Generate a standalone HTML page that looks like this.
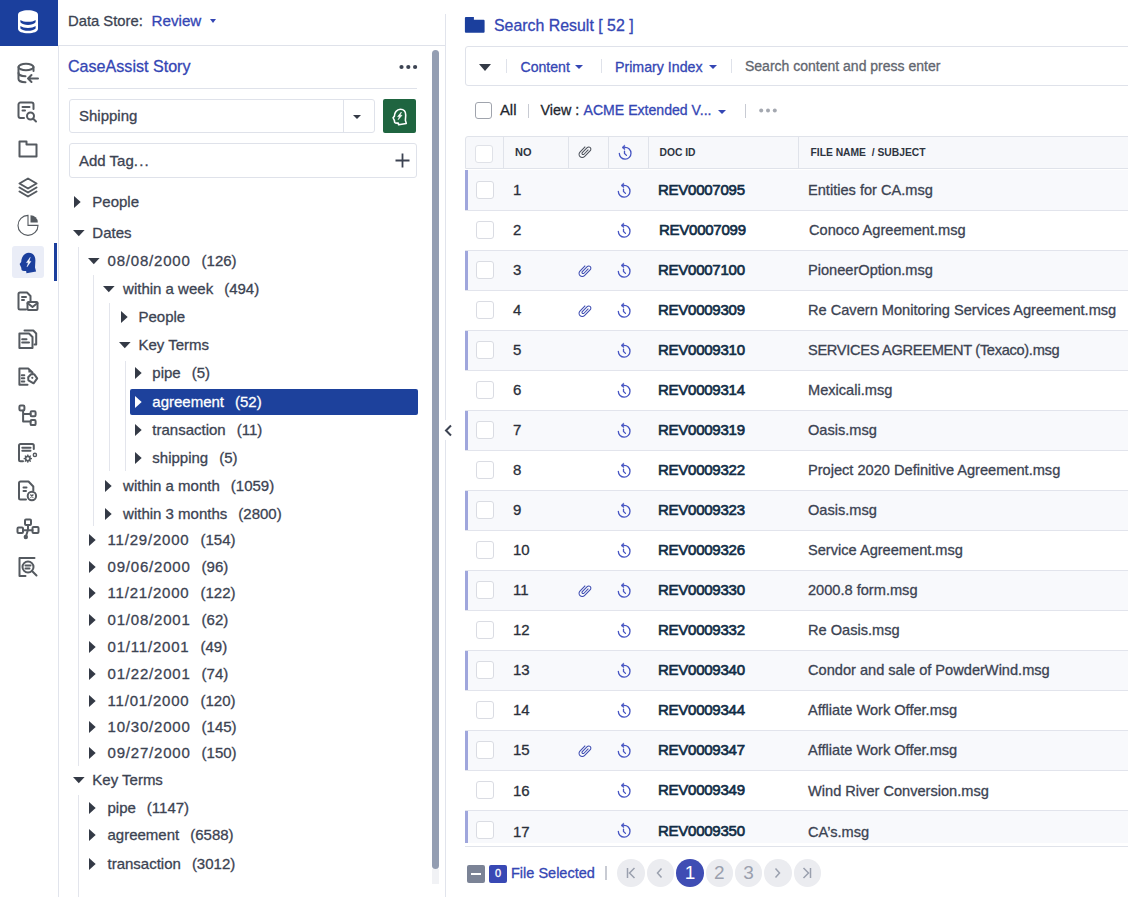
<!DOCTYPE html>
<html><head><meta charset="utf-8">
<style>
*{margin:0;padding:0;box-sizing:border-box}
html,body{width:1128px;height:897px;overflow:hidden;background:#fff;font-family:"Liberation Sans",sans-serif;color:#3c4352;-webkit-text-stroke:0.3px currentColor}
.abs{position:absolute}
.tr{width:0;height:0;border-top:5.9px solid transparent;border-bottom:5.9px solid transparent;border-left:6.6px solid #343a46}
.td{width:0;height:0;border-left:5.8px solid transparent;border-right:5.8px solid transparent;border-top:6.6px solid #343a46}
.tt{font-size:15px;line-height:20px;white-space:nowrap}

.cnt{margin-left:11px}
.row{left:465px;width:680px;height:40px}
.rb{left:465px;width:680px;height:1px;background:#e2e4ec}
.cb{width:18px;height:18px;border:1px solid #dadce3;border-radius:3px;background:#fff}
.rt{top:10px;font-size:15px;line-height:20px;color:#2a2f3a}
.rd{top:9.5px;font-size:15px;line-height:20px;letter-spacing:-0.25px;-webkit-text-stroke:0.65px currentColor;color:#102c45;white-space:nowrap}
.rf{top:10px;font-size:14.6px;line-height:20px;color:#3c4352;white-space:nowrap}
</style></head><body>
<!-- left nav -->
<div class="abs" style="left:0;top:0;width:58px;height:46px;background:#1b3f9d"></div>
<svg class="abs" style="left:17px;top:9px" width="22" height="26" viewBox="0 0 22 26">
<path d="M1 5.8C1 2.8 5.5 1.3 11 1.3s10 1.5 10 4.5v14c0 3-4.5 4.5-10 4.5S1 22.8 1 19.8z" fill="#fff"/>
<path d="M3.4 11C5 12.3 8 12.8 11 12.8S17 12.3 18.6 11V13.2C17 14.9 14 15.9 11 15.9S5 14.9 3.4 13.2z" fill="#1b3f9d"/>
<path d="M3.4 17.1C5 18.4 8 18.9 11 18.9S17 18.4 18.6 17.1V19.4C17 21 14 21.8 11 21.8S5 21 3.4 19.4z" fill="#1b3f9d"/>
</svg>
<div class="abs" style="left:57.5px;top:46px;width:1px;height:851px;background:#e1e4ec"></div>
<div class="abs" style="left:12px;top:246px;width:32px;height:32px;background:#eaedf7;border-radius:3px"></div>
<svg class="abs" style="left:19px;top:252px" width="18" height="22" viewBox="0 0 18 22"><path d="M9.75 0.8C13.5 0.8 16.4 3.5 16.4 8.5C16.4 11 16 13 16 15.5L17.1 19.5L7.5 21.3L7.1 19C5.5 19.2 3.2 19 2.6 18L2.2 15.5L1.5 14L0.6 12L2.2 10C2.2 5.5 5 0.8 9.75 0.8z" fill="#1b3f9d"/><path d="M11.2 5.4L7.5 10.6H9.5L8.1 14.8L11.9 9.4H9.9z" fill="#fff" stroke="#fff" stroke-width="0.5" stroke-linejoin="round"/></svg>
<div class="abs" style="left:54px;top:243px;width:3px;height:38px;background:#1b3f9d"></div>
<svg class="abs" style="left:16px;top:62px" width="24" height="24" viewBox="0 0 24 24"><g fill="none" stroke="#555a60" stroke-width="2" stroke-linecap="round" stroke-linejoin="round"><ellipse cx="10" cy="5" rx="7.5" ry="3.2"/><path d="M2.5 5v12c0 1.8 3 3.2 7 3.2"/><path d="M17.5 5v4"/><path d="M2.5 11c0 1.8 3 3.2 7 3.2"/><path d="M12 16.5h10M15.5 13l-3.5 3.5 3.5 3.5"/></g></svg>
<svg class="abs" style="left:16px;top:100px" width="24" height="24" viewBox="0 0 24 24"><g fill="none" stroke="#555a60" stroke-width="2" stroke-linecap="round" stroke-linejoin="round"><path d="M8 18H4.5a2 2 0 0 1-2-2V4.5a2 2 0 0 1 2-2h11a2 2 0 0 1 2 2V9"/><path d="M6.5 7h7M6.5 10.5h2.5"/><circle cx="14.5" cy="16" r="3.5"/><path d="M17 18.5l3 3"/></g></svg>
<svg class="abs" style="left:16px;top:137px" width="24" height="24" viewBox="0 0 24 24"><g fill="none" stroke="#555a60" stroke-width="2" stroke-linecap="round" stroke-linejoin="round"><path d="M3.5 4.5h7v3h10v12h-17z"/></g></svg>
<svg class="abs" style="left:16px;top:175px" width="24" height="24" viewBox="0 0 24 24"><g fill="none" stroke="#555a60" stroke-width="2" stroke-linecap="round" stroke-linejoin="round"><path d="M12 3.5l8.5 5-8.5 5-8.5-5z"/><path d="M3.5 12.5l8.5 5 8.5-5"/><path d="M3.5 16.5l8.5 5 8.5-5"/></g></svg>
<svg class="abs" style="left:16px;top:213px" width="24" height="24" viewBox="0 0 24 24"><path d="M12 2.4A10 10 0 1 0 22 12.4H12z" fill="none" stroke="#555a60" stroke-width="1.1" stroke-linejoin="miter"/><path d="M14.5 2.3A7.2 7.2 0 0 1 21.8 9.4H14.5z" fill="#555a60"/></svg>
<svg class="abs" style="left:16px;top:289px" width="24" height="24" viewBox="0 0 24 24"><g fill="none" stroke="#555a60" stroke-width="2" stroke-linecap="round" stroke-linejoin="round"><path d="M10 20.5H4a1.5 1.5 0 0 1-1.5-1.5V5A1.5 1.5 0 0 1 4 3.5h7l3.5 3.5v5"/><path d="M6 8h4M6 11h2"/><rect x="11.5" y="13" width="10" height="8" rx="1"/><path d="M11.5 14l5 4 5-4"/></g></svg>
<svg class="abs" style="left:16px;top:327px" width="24" height="24" viewBox="0 0 24 24"><g fill="none" stroke="#555a60" stroke-width="2" stroke-linecap="round" stroke-linejoin="round"><path d="M3.4 6.5H13L16.5 10V20.9H3.4z"/><path d="M6.2 12.2H10.5M6.2 15.4H13"/><path d="M8.5 3.5H17.3L20.2 6.5V17.5H18.5"/></g></svg>
<svg class="abs" style="left:16px;top:365px" width="24" height="24" viewBox="0 0 24 24"><g fill="none" stroke="#555a60" stroke-width="2" stroke-linecap="round" stroke-linejoin="round"><path d="M11.5 19.8H3.4V3.6H12.4L16.5 7.5V8.8"/><path d="M5.8 10.3H8.3M5.8 13.2H8.3M5.8 16.6H8.3"/><path d="M12.2 12.3L15 9.3H18.3L21.2 13.3L17.6 18.3L12.4 15.3z"/></g><path d="M12.4 3.6L16.5 7.5H12.4z" fill="#555a60"/><circle cx="16.3" cy="12.8" r="1.1" fill="#555a60"/></svg>
<svg class="abs" style="left:16px;top:403px" width="24" height="24" viewBox="0 0 24 24"><g fill="none" stroke="#555a60" stroke-width="2" stroke-linecap="round" stroke-linejoin="round"><rect x="3.4" y="2.5" width="5" height="5" rx="1.2"/><rect x="14.6" y="8.3" width="5" height="5" rx="1.2"/><rect x="14.6" y="17.1" width="5" height="5" rx="1.2"/><path d="M7.1 7.5V18.4H14.6M7.1 11H14.6"/></g></svg>
<svg class="abs" style="left:16px;top:441px" width="24" height="24" viewBox="0 0 24 24"><g fill="none" stroke="#555a60" stroke-width="2" stroke-linecap="round" stroke-linejoin="round"><path d="M7 20.3H4.5A1.5 1.5 0 0 1 3 18.8V4.5A1.5 1.5 0 0 1 4.5 3H16.3A1.5 1.5 0 0 1 17.8 4.5V8"/><path d="M6.3 6.8H14.5M6.3 9.8H14.5"/></g><path d="M14.80 16.83L15.97 17.07L15.97 18.13L14.80 18.37L14.47 19.18L15.12 20.17L14.37 20.92L13.38 20.27L12.57 20.60L12.33 21.77L11.27 21.77L11.03 20.60L10.22 20.27L9.23 20.92L8.48 20.17L9.13 19.18L8.80 18.37L7.63 18.13L7.63 17.07L8.80 16.83L9.13 16.02L8.48 15.03L9.23 14.28L10.22 14.93L11.03 14.60L11.27 13.43L12.33 13.43L12.57 14.60L13.38 14.93L14.37 14.28L15.12 15.03L14.47 16.02z" fill="#555a60"/><circle cx="11.80" cy="17.60" r="1.3" fill="#fff"/><circle cx="18.9" cy="13.9" r="1.6" fill="none" stroke="#555a60" stroke-width="1.4"/></svg>
<svg class="abs" style="left:16px;top:479px" width="24" height="24" viewBox="0 0 24 24"><g fill="none" stroke="#555a60" stroke-width="2" stroke-linecap="round" stroke-linejoin="round"><path d="M10 20.5H4.5A1.5 1.5 0 0 1 3 19V4A1.5 1.5 0 0 1 4.5 2.5H12.5L17.3 7.5V11.5"/><path d="M7.5 8.5H10.5M7.5 12H10"/><circle cx="15.9" cy="17" r="4.2"/></g><path d="M14.4 15.5l3 3M17.4 15.5l-3 3" stroke="#555a60" stroke-width="1.3"/></svg>
<svg class="abs" style="left:16px;top:517px" width="24" height="24" viewBox="0 0 24 24"><g fill="none" stroke="#555a60" stroke-width="2" stroke-linecap="round" stroke-linejoin="round"><rect x="9" y="2.5" width="6" height="5.5" rx="1"/><rect x="1.5" y="10.5" width="5.5" height="5.5" rx="1"/><rect x="16.5" y="10" width="6" height="6" rx="1"/><path d="M12 8v5M7 13.3h9.5M12 13l-2 6"/></g><circle cx="9.8" cy="20" r="2.2" fill="#555a60"/></svg>
<svg class="abs" style="left:16px;top:555px" width="24" height="24" viewBox="0 0 24 24"><g fill="none" stroke="#555a60" stroke-width="2" stroke-linecap="round" stroke-linejoin="round"><path d="M18.5 3H3.5v18h6"/><circle cx="12" cy="12" r="5.5"/><path d="M9.5 10.5h5M9.5 13.5h4M16 16l4.5 4.5"/></g></svg>
<!-- top header -->
<div class="abs" style="left:58px;top:45px;width:388px;height:1px;background:#dfe2ea"></div>
<div class="abs" style="left:68px;top:11px;font-size:14.8px;line-height:20px;color:#3c4352;white-space:nowrap">Data Store:</div>
<div class="abs" style="left:151.5px;top:11px;font-size:15.2px;line-height:20px;color:#3446b4;white-space:nowrap">Review</div>
<div class="abs td" style="left:209.5px;top:19px;border-left-width:3.5px;border-right-width:3.5px;border-top-width:4px;border-top-color:#3446b4"></div>
<!-- left panel -->
<div class="abs" style="left:445px;top:14px;width:1px;height:406px;background:#e1e4ec"></div>
<div class="abs" style="left:445px;top:440px;width:1px;height:457px;background:#e1e4ec"></div>
<svg class="abs" style="left:444px;top:424px" width="9" height="13" viewBox="0 0 9 13"><path d="M7 1.5L2 6.5l5 5" fill="none" stroke="#3c4352" stroke-width="2"/></svg>
<div class="abs" style="left:68px;top:56px;font-size:16.1px;line-height:20px;color:#3446b4;white-space:nowrap">CaseAssist Story</div>
<svg class="abs" style="left:399px;top:64px" width="19" height="6" viewBox="0 0 19 6"><circle cx="2.5" cy="3" r="2.1" fill="#3c4352"/><circle cx="9.3" cy="3" r="2.1" fill="#3c4352"/><circle cx="16.1" cy="3" r="2.1" fill="#3c4352"/></svg>
<div class="abs" style="left:68px;top:88px;width:349px;height:1px;background:#dfe2ea"></div>
<div class="abs" style="left:69px;top:99px;width:306px;height:34px;border:1px solid #dfe2ea;border-radius:3px"></div>
<div class="abs" style="left:343px;top:100px;width:1px;height:32px;background:#dfe2ea"></div>
<div class="abs td" style="left:353px;top:114.5px;border-left-width:4.5px;border-right-width:4.5px;border-top-width:4.5px"></div>
<div class="abs" style="left:79px;top:106px;font-size:15px;line-height:20px;color:#3c4352">Shipping</div>
<div class="abs" style="left:383px;top:99px;width:33px;height:34px;background:#1f6540;border-radius:2px"></div>
<svg class="abs" style="left:390px;top:106px" width="18" height="20" viewBox="0 0 18 20"><g transform="translate(2.6 2.6) scale(0.8 0.76)"><path d="M9.75 0.8C13.5 0.8 16.4 3.5 16.4 8.5C16.4 11 16 13 16 15.5L17.1 19.5L7.5 21.3L7.1 19C5.5 19.2 3.2 19 2.6 18L2.2 15.5L1.5 14L0.6 12L2.2 10C2.2 5.5 5 0.8 9.75 0.8z" fill="none" stroke="#fff" stroke-width="2" stroke-linejoin="round"/></g><path d="M11.4 6L7.6 10.6H9.5L8.1 13.8L12 9.3H10.1z" fill="#fff" stroke="#fff" stroke-width="0.6" stroke-linejoin="round"/></svg>
<div class="abs" style="left:69px;top:143px;width:348px;height:35px;border:1px solid #dfe2ea;border-radius:3px"></div>
<div class="abs" style="left:79px;top:151px;font-size:15px;line-height:20px;color:#3c4352">Add Tag<span style="letter-spacing:1.2px">...</span></div>
<svg class="abs" style="left:395px;top:153px" width="15" height="15" viewBox="0 0 15 15"><path d="M7.5 0.5v14M0.5 7.5h14" stroke="#3c4352" stroke-width="1.8"/></svg>
<div class="abs" style="left:432px;top:50px;width:7px;height:819px;background:#949eb2;border-radius:3.5px"></div>
<div class="abs" style="left:432px;top:869px;width:7px;height:15px;background:#f1f2f5"></div>
<div class="abs" style="left:78.0px;top:247px;width:1px;height:519px;background:#e3e5ec"></div>
<div class="abs" style="left:93.0px;top:275px;width:1px;height:251px;background:#e3e5ec"></div>
<div class="abs" style="left:109.0px;top:303px;width:1px;height:168px;background:#e3e5ec"></div>
<div class="abs" style="left:125.0px;top:361px;width:1px;height:110px;background:#e3e5ec"></div>
<div class="abs" style="left:78.0px;top:795px;width:1px;height:102px;background:#e3e5ec"></div>
<div class="abs" style="left:130px;top:389px;width:288px;height:26px;background:#1d419c;border-radius:2px"></div>
<svg class="abs" style="left:73px;top:195.4px" width="9" height="14" viewBox="0 0 9 14"><path d="M1 1.1L7.7 7 1 12.9z" fill="#343a46"/></svg>
<div class="abs tt" style="left:92.3px;top:192.4px;color:#3c4352"><span style="">People</span></div>
<svg class="abs" style="left:71.7px;top:228.5px" width="14" height="9" viewBox="0 0 14 9"><path d="M1 1H12.6L6.8 7.3z" fill="#343a46"/></svg>
<div class="abs tt" style="left:92.3px;top:222.5px;color:#3c4352"><span style="">Dates</span></div>
<svg class="abs" style="left:86.7px;top:256.8px" width="14" height="9" viewBox="0 0 14 9"><path d="M1 1H12.6L6.8 7.3z" fill="#343a46"/></svg>
<div class="abs tt" style="left:107.5px;top:250.8px;color:#3c4352"><span style="letter-spacing:0.8px;">08/08/2000</span><span class="cnt">(126)</span></div>
<svg class="abs" style="left:102.2px;top:284.7px" width="14" height="9" viewBox="0 0 14 9"><path d="M1 1H12.6L6.8 7.3z" fill="#343a46"/></svg>
<div class="abs tt" style="left:123.1px;top:278.7px;color:#3c4352"><span style="">within a week</span><span class="cnt">(494)</span></div>
<svg class="abs" style="left:119.5px;top:310.2px" width="9" height="14" viewBox="0 0 9 14"><path d="M1 1.1L7.7 7 1 12.9z" fill="#343a46"/></svg>
<div class="abs tt" style="left:138.5px;top:307.2px;color:#3c4352"><span style="">People</span></div>
<svg class="abs" style="left:118.2px;top:341.2px" width="14" height="9" viewBox="0 0 14 9"><path d="M1 1H12.6L6.8 7.3z" fill="#343a46"/></svg>
<div class="abs tt" style="left:138.5px;top:335.2px;color:#3c4352"><span style="">Key Terms</span></div>
<svg class="abs" style="left:134.4px;top:366.3px" width="9" height="14" viewBox="0 0 9 14"><path d="M1 1.1L7.7 7 1 12.9z" fill="#343a46"/></svg>
<div class="abs tt" style="left:152.3px;top:363.3px;color:#3c4352"><span style="">pipe</span><span class="cnt">(5)</span></div>
<svg class="abs" style="left:134.4px;top:394.5px" width="9" height="14" viewBox="0 0 9 14"><path d="M1 1.1L7.7 7 1 12.9z" fill="#ffffff"/></svg>
<div class="abs tt" style="left:152.3px;top:391.5px;color:#ffffff"><span style="">agreement</span><span class="cnt">(52)</span></div>
<svg class="abs" style="left:134.4px;top:422.6px" width="9" height="14" viewBox="0 0 9 14"><path d="M1 1.1L7.7 7 1 12.9z" fill="#343a46"/></svg>
<div class="abs tt" style="left:152.3px;top:419.6px;color:#3c4352"><span style="">transaction</span><span class="cnt">(11)</span></div>
<svg class="abs" style="left:134.4px;top:450.6px" width="9" height="14" viewBox="0 0 9 14"><path d="M1 1.1L7.7 7 1 12.9z" fill="#343a46"/></svg>
<div class="abs tt" style="left:152.3px;top:447.6px;color:#3c4352"><span style="">shipping</span><span class="cnt">(5)</span></div>
<svg class="abs" style="left:103.5px;top:478.7px" width="9" height="14" viewBox="0 0 9 14"><path d="M1 1.1L7.7 7 1 12.9z" fill="#343a46"/></svg>
<div class="abs tt" style="left:123.1px;top:475.7px;color:#3c4352"><span style="">within a month</span><span class="cnt">(1059)</span></div>
<svg class="abs" style="left:103.5px;top:506.7px" width="9" height="14" viewBox="0 0 9 14"><path d="M1 1.1L7.7 7 1 12.9z" fill="#343a46"/></svg>
<div class="abs tt" style="left:123.1px;top:503.7px;color:#3c4352"><span style="">within 3 months</span><span class="cnt">(2800)</span></div>
<svg class="abs" style="left:88px;top:532.5px" width="9" height="14" viewBox="0 0 9 14"><path d="M1 1.1L7.7 7 1 12.9z" fill="#343a46"/></svg>
<div class="abs tt" style="left:107.5px;top:529.5px;color:#3c4352"><span style="letter-spacing:0.8px;">11/29/2000</span><span class="cnt">(154)</span></div>
<svg class="abs" style="left:88px;top:559.5px" width="9" height="14" viewBox="0 0 9 14"><path d="M1 1.1L7.7 7 1 12.9z" fill="#343a46"/></svg>
<div class="abs tt" style="left:107.5px;top:556.5px;color:#3c4352"><span style="letter-spacing:0.8px;">09/06/2000</span><span class="cnt">(96)</span></div>
<svg class="abs" style="left:88px;top:586.2px" width="9" height="14" viewBox="0 0 9 14"><path d="M1 1.1L7.7 7 1 12.9z" fill="#343a46"/></svg>
<div class="abs tt" style="left:107.5px;top:583.2px;color:#3c4352"><span style="letter-spacing:0.8px;">11/21/2000</span><span class="cnt">(122)</span></div>
<svg class="abs" style="left:88px;top:613.3px" width="9" height="14" viewBox="0 0 9 14"><path d="M1 1.1L7.7 7 1 12.9z" fill="#343a46"/></svg>
<div class="abs tt" style="left:107.5px;top:610.3px;color:#3c4352"><span style="letter-spacing:0.8px;">01/08/2001</span><span class="cnt">(62)</span></div>
<svg class="abs" style="left:88px;top:639.8px" width="9" height="14" viewBox="0 0 9 14"><path d="M1 1.1L7.7 7 1 12.9z" fill="#343a46"/></svg>
<div class="abs tt" style="left:107.5px;top:636.8px;color:#3c4352"><span style="letter-spacing:0.8px;">01/11/2001</span><span class="cnt">(49)</span></div>
<svg class="abs" style="left:88px;top:667.0px" width="9" height="14" viewBox="0 0 9 14"><path d="M1 1.1L7.7 7 1 12.9z" fill="#343a46"/></svg>
<div class="abs tt" style="left:107.5px;top:664.0px;color:#3c4352"><span style="letter-spacing:0.8px;">01/22/2001</span><span class="cnt">(74)</span></div>
<svg class="abs" style="left:88px;top:693.6px" width="9" height="14" viewBox="0 0 9 14"><path d="M1 1.1L7.7 7 1 12.9z" fill="#343a46"/></svg>
<div class="abs tt" style="left:107.5px;top:690.6px;color:#3c4352"><span style="letter-spacing:0.8px;">11/01/2000</span><span class="cnt">(120)</span></div>
<svg class="abs" style="left:88px;top:720.2px" width="9" height="14" viewBox="0 0 9 14"><path d="M1 1.1L7.7 7 1 12.9z" fill="#343a46"/></svg>
<div class="abs tt" style="left:107.5px;top:717.2px;color:#3c4352"><span style="letter-spacing:0.8px;">10/30/2000</span><span class="cnt">(145)</span></div>
<svg class="abs" style="left:88px;top:746.0px" width="9" height="14" viewBox="0 0 9 14"><path d="M1 1.1L7.7 7 1 12.9z" fill="#343a46"/></svg>
<div class="abs tt" style="left:107.5px;top:743.0px;color:#3c4352"><span style="letter-spacing:0.8px;">09/27/2000</span><span class="cnt">(150)</span></div>
<svg class="abs" style="left:71.7px;top:776.4px" width="14" height="9" viewBox="0 0 14 9"><path d="M1 1H12.6L6.8 7.3z" fill="#343a46"/></svg>
<div class="abs tt" style="left:92.3px;top:770.4px;color:#3c4352"><span style="">Key Terms</span></div>
<svg class="abs" style="left:88px;top:800.7px" width="9" height="14" viewBox="0 0 9 14"><path d="M1 1.1L7.7 7 1 12.9z" fill="#343a46"/></svg>
<div class="abs tt" style="left:107.5px;top:797.7px;color:#3c4352"><span style="">pipe</span><span class="cnt">(1147)</span></div>
<svg class="abs" style="left:88px;top:827.8px" width="9" height="14" viewBox="0 0 9 14"><path d="M1 1.1L7.7 7 1 12.9z" fill="#343a46"/></svg>
<div class="abs tt" style="left:107.5px;top:824.8px;color:#3c4352"><span style="">agreement</span><span class="cnt">(6588)</span></div>
<svg class="abs" style="left:88px;top:857.3px" width="9" height="14" viewBox="0 0 9 14"><path d="M1 1.1L7.7 7 1 12.9z" fill="#343a46"/></svg>
<div class="abs tt" style="left:107.5px;top:854.3px;color:#3c4352"><span style="">transaction</span><span class="cnt">(3012)</span></div>
<!-- right panel -->
<svg class="abs" style="left:464px;top:16px" width="21" height="17" viewBox="0 0 21 17"><path d="M0.9 2.1A1 1 0 0 1 1.9 1.1H9.9V3.7H19.6A1 1 0 0 1 20.6 4.7V15.8A1 1 0 0 1 19.6 16.8H1.9A1 1 0 0 1 0.9 15.8z" fill="#1b3f9d"/></svg>
<div class="abs" style="left:494px;top:16px;font-size:15.9px;line-height:20px;color:#3446b4;white-space:nowrap">Search Result [ 52 ]</div>
<div class="abs" style="left:465px;top:45.5px;width:700px;height:40.5px;border:1px solid #dfe2ea;border-radius:3px"></div>
<div class="abs td" style="left:479px;top:63.5px;border-left-width:6px;border-right-width:6px;border-top-width:7px"></div>
<div class="abs" style="left:506px;top:59px;width:1px;height:14px;background:#dfe2ea"></div>
<div class="abs" style="left:520.5px;top:57px;font-size:14.1px;line-height:20px;color:#3446b4">Content</div>
<div class="abs td" style="left:575px;top:65px;border-left-width:4px;border-right-width:4px;border-top-width:4.5px;border-top-color:#3446b4"></div>
<div class="abs" style="left:601px;top:59px;width:1px;height:14px;background:#dfe2ea"></div>
<div class="abs" style="left:615px;top:57px;font-size:14.2px;line-height:20px;color:#3446b4;white-space:nowrap">Primary Index</div>
<div class="abs td" style="left:708.5px;top:65px;border-left-width:4px;border-right-width:4px;border-top-width:4.5px;border-top-color:#3446b4"></div>
<div class="abs" style="left:731px;top:59px;width:1px;height:14px;background:#dfe2ea"></div>
<div class="abs" style="left:745px;top:56px;font-size:14px;line-height:20px;color:#62666f;white-space:nowrap">Search content and press enter</div>
<!-- toolbar -->
<div class="abs cb" style="left:475px;top:102px;width:17px;height:17px;border-color:#a0a4ad"></div>
<div class="abs" style="left:500px;top:100px;font-size:14.8px;line-height:20px;color:#22262e">All</div>
<div class="abs" style="left:528px;top:103.5px;width:1px;height:14px;background:#c8cbd3"></div>
<div class="abs" style="left:540.5px;top:100px;font-size:14.3px;line-height:20px;color:#22262e;white-space:nowrap">View :</div>
<div class="abs" style="left:583.5px;top:100px;font-size:14.1px;line-height:20px;color:#3446b4;white-space:nowrap">ACME Extended V...</div>
<div class="abs td" style="left:718px;top:110px;border-left-width:4px;border-right-width:4px;border-top-width:4.5px;border-top-color:#3446b4"></div>
<div class="abs" style="left:745px;top:103.5px;width:1px;height:14px;background:#c8cbd3"></div>
<svg class="abs" style="left:759px;top:108px" width="19" height="5" viewBox="0 0 19 5"><circle cx="2.2" cy="2.5" r="2" fill="#a4a8b0"/><circle cx="9" cy="2.5" r="2" fill="#a4a8b0"/><circle cx="15.8" cy="2.5" r="2" fill="#a4a8b0"/></svg>
<!-- table header -->
<div class="abs" style="left:465px;top:136px;width:700px;height:33px;background:#f7f8fb;border:1px solid #e0e3ea;border-radius:3px 0 0 0"></div>
<div class="abs" style="left:503px;top:137px;width:1px;height:31px;background:#e0e3ea"></div>
<div class="abs" style="left:568px;top:137px;width:1px;height:31px;background:#e0e3ea"></div>
<div class="abs" style="left:608px;top:137px;width:1px;height:31px;background:#e0e3ea"></div>
<div class="abs" style="left:648px;top:137px;width:1px;height:31px;background:#e0e3ea"></div>
<div class="abs" style="left:798px;top:137px;width:1px;height:31px;background:#e0e3ea"></div>
<div class="abs cb" style="left:475px;top:144.5px;border-color:#e0e2e8"></div>
<div class="abs" style="left:515px;top:145px;font-size:11px;line-height:14px;font-weight:bold;-webkit-text-stroke:0;color:#2e3440">NO</div>
<svg class="abs" style="left:577px;top:144px" width="16" height="16" viewBox="0 0 24 24"><path d="M16.5 6v11.5c0 2.21-1.79 4-4 4s-4-1.79-4-4V5c0-1.38 1.12-2.5 2.5-2.5s2.5 1.12 2.5 2.5v10.5c0 .55-.45 1-1 1s-1-.45-1-1V6H10v9.5c0 1.38 1.12 2.5 2.5 2.5s2.5-1.12 2.5-2.5V5c0-2.21-1.79-4-4-4S7 2.79 7 5v12.5c0 3.04 2.46 5.5 5.5 5.5s5.5-2.46 5.5-5.5V6h-1.5z" fill="#4a4f59" transform="rotate(44 12 12) translate(24 0) scale(-1 1)"/></svg>
<div class="abs" style="left:618px;top:143px"><svg width="15" height="18" viewBox="0 0 15 18"><path d="M1.3 10.3A5.85 5.85 0 1 0 7.1 4.4" fill="none" stroke="#4453c2" stroke-width="1.3" stroke-linecap="round"/><path d="M6.6 2.1L4 4.5 6.7 6.8z" fill="#4453c2" stroke="#4453c2" stroke-width="0.6" stroke-linejoin="round"/><path d="M6.5 8.1V10.5L8.5 12.4" fill="none" stroke="#4453c2" stroke-width="1.3" stroke-linecap="round"/></svg></div>
<div class="abs" style="left:659.5px;top:146px;font-size:10.3px;line-height:14px;font-weight:bold;-webkit-text-stroke:0;color:#2e3440;white-space:nowrap">DOC ID</div>
<div class="abs" style="left:810.5px;top:146px;font-size:10.3px;line-height:14px;font-weight:bold;-webkit-text-stroke:0;color:#2e3440;white-space:nowrap">FILE NAME &nbsp;/ SUBJECT</div>
<!-- rows -->
<div class="abs" style="left:0;top:0;width:1128px;height:842.5px;overflow:hidden">
<div class="abs row" style="top:170px;background:#f8f9fc"><div class="abs" style="left:0;top:0;width:3px;height:100%;background:#9fa6dc"></div>
<div class="abs cb" style="left:11px;top:11px"></div>
<div class="abs rt" style="left:48px;margin-top:0px">1</div>

<div class="abs" style="left:152px;top:11px"><svg width="15" height="18" viewBox="0 0 15 18"><path d="M1.3 10.3A5.85 5.85 0 1 0 7.1 4.4" fill="none" stroke="#4453c2" stroke-width="1.3" stroke-linecap="round"/><path d="M6.6 2.1L4 4.5 6.7 6.8z" fill="#4453c2" stroke="#4453c2" stroke-width="0.6" stroke-linejoin="round"/><path d="M6.5 8.1V10.5L8.5 12.4" fill="none" stroke="#4453c2" stroke-width="1.3" stroke-linecap="round"/></svg></div>
<div class="abs rd" style="left:193px;margin-top:0px">REV0007095</div>
<div class="abs rf" style="left:343px;margin-top:0px;">Entities for CA.msg</div>
</div>
<div class="abs row" style="top:210px;background:#ffffff">
<div class="abs cb" style="left:11px;top:11px"></div>
<div class="abs rt" style="left:48px;margin-top:0px">2</div>

<div class="abs" style="left:152px;top:11px"><svg width="15" height="18" viewBox="0 0 15 18"><path d="M1.3 10.3A5.85 5.85 0 1 0 7.1 4.4" fill="none" stroke="#4453c2" stroke-width="1.3" stroke-linecap="round"/><path d="M6.6 2.1L4 4.5 6.7 6.8z" fill="#4453c2" stroke="#4453c2" stroke-width="0.6" stroke-linejoin="round"/><path d="M6.5 8.1V10.5L8.5 12.4" fill="none" stroke="#4453c2" stroke-width="1.3" stroke-linecap="round"/></svg></div>
<div class="abs rd" style="left:194px;margin-top:0px">REV0007099</div>
<div class="abs rf" style="left:344px;margin-top:0px;">Conoco Agreement.msg</div>
</div>
<div class="abs row" style="top:250px;background:#f8f9fc"><div class="abs" style="left:0;top:0;width:3px;height:100%;background:#9fa6dc"></div>
<div class="abs cb" style="left:11px;top:11px"></div>
<div class="abs rt" style="left:48px;margin-top:0px">3</div>
<div class="abs" style="left:112px;top:12.7px"><svg width="16" height="16" viewBox="0 0 24 24"><path d="M16.5 6v11.5c0 2.21-1.79 4-4 4s-4-1.79-4-4V5c0-1.38 1.12-2.5 2.5-2.5s2.5 1.12 2.5 2.5v10.5c0 .55-.45 1-1 1s-1-.45-1-1V6H10v9.5c0 1.38 1.12 2.5 2.5 2.5s2.5-1.12 2.5-2.5V5c0-2.21-1.79-4-4-4S7 2.79 7 5v12.5c0 3.04 2.46 5.5 5.5 5.5s5.5-2.46 5.5-5.5V6h-1.5z" fill="#3a49b0" transform="rotate(44 12 12) translate(24 0) scale(-1 1)"/></svg></div>
<div class="abs" style="left:152px;top:11px"><svg width="15" height="18" viewBox="0 0 15 18"><path d="M1.3 10.3A5.85 5.85 0 1 0 7.1 4.4" fill="none" stroke="#4453c2" stroke-width="1.3" stroke-linecap="round"/><path d="M6.6 2.1L4 4.5 6.7 6.8z" fill="#4453c2" stroke="#4453c2" stroke-width="0.6" stroke-linejoin="round"/><path d="M6.5 8.1V10.5L8.5 12.4" fill="none" stroke="#4453c2" stroke-width="1.3" stroke-linecap="round"/></svg></div>
<div class="abs rd" style="left:193px;margin-top:0px">REV0007100</div>
<div class="abs rf" style="left:343px;margin-top:0px;">PioneerOption.msg</div>
</div>
<div class="abs row" style="top:290px;background:#ffffff">
<div class="abs cb" style="left:11px;top:11px"></div>
<div class="abs rt" style="left:48px;margin-top:0px">4</div>
<div class="abs" style="left:112px;top:12.7px"><svg width="16" height="16" viewBox="0 0 24 24"><path d="M16.5 6v11.5c0 2.21-1.79 4-4 4s-4-1.79-4-4V5c0-1.38 1.12-2.5 2.5-2.5s2.5 1.12 2.5 2.5v10.5c0 .55-.45 1-1 1s-1-.45-1-1V6H10v9.5c0 1.38 1.12 2.5 2.5 2.5s2.5-1.12 2.5-2.5V5c0-2.21-1.79-4-4-4S7 2.79 7 5v12.5c0 3.04 2.46 5.5 5.5 5.5s5.5-2.46 5.5-5.5V6h-1.5z" fill="#3a49b0" transform="rotate(44 12 12) translate(24 0) scale(-1 1)"/></svg></div>
<div class="abs" style="left:152px;top:11px"><svg width="15" height="18" viewBox="0 0 15 18"><path d="M1.3 10.3A5.85 5.85 0 1 0 7.1 4.4" fill="none" stroke="#4453c2" stroke-width="1.3" stroke-linecap="round"/><path d="M6.6 2.1L4 4.5 6.7 6.8z" fill="#4453c2" stroke="#4453c2" stroke-width="0.6" stroke-linejoin="round"/><path d="M6.5 8.1V10.5L8.5 12.4" fill="none" stroke="#4453c2" stroke-width="1.3" stroke-linecap="round"/></svg></div>
<div class="abs rd" style="left:193px;margin-top:0px">REV0009309</div>
<div class="abs rf" style="left:343px;margin-top:0px;">Re Cavern Monitoring Services Agreement.msg</div>
</div>
<div class="abs row" style="top:330px;background:#f8f9fc"><div class="abs" style="left:0;top:0;width:3px;height:100%;background:#9fa6dc"></div>
<div class="abs cb" style="left:11px;top:11px"></div>
<div class="abs rt" style="left:48px;margin-top:0px">5</div>

<div class="abs" style="left:152px;top:11px"><svg width="15" height="18" viewBox="0 0 15 18"><path d="M1.3 10.3A5.85 5.85 0 1 0 7.1 4.4" fill="none" stroke="#4453c2" stroke-width="1.3" stroke-linecap="round"/><path d="M6.6 2.1L4 4.5 6.7 6.8z" fill="#4453c2" stroke="#4453c2" stroke-width="0.6" stroke-linejoin="round"/><path d="M6.5 8.1V10.5L8.5 12.4" fill="none" stroke="#4453c2" stroke-width="1.3" stroke-linecap="round"/></svg></div>
<div class="abs rd" style="left:193px;margin-top:0px">REV0009310</div>
<div class="abs rf" style="left:343px;margin-top:0px;letter-spacing:-0.3px">SERVICES AGREEMENT (Texaco).msg</div>
</div>
<div class="abs row" style="top:370px;background:#ffffff">
<div class="abs cb" style="left:11px;top:11px"></div>
<div class="abs rt" style="left:48px;margin-top:0px">6</div>

<div class="abs" style="left:152px;top:11px"><svg width="15" height="18" viewBox="0 0 15 18"><path d="M1.3 10.3A5.85 5.85 0 1 0 7.1 4.4" fill="none" stroke="#4453c2" stroke-width="1.3" stroke-linecap="round"/><path d="M6.6 2.1L4 4.5 6.7 6.8z" fill="#4453c2" stroke="#4453c2" stroke-width="0.6" stroke-linejoin="round"/><path d="M6.5 8.1V10.5L8.5 12.4" fill="none" stroke="#4453c2" stroke-width="1.3" stroke-linecap="round"/></svg></div>
<div class="abs rd" style="left:193px;margin-top:0px">REV0009314</div>
<div class="abs rf" style="left:343px;margin-top:0px;">Mexicali.msg</div>
</div>
<div class="abs row" style="top:410px;background:#f8f9fc"><div class="abs" style="left:0;top:0;width:3px;height:100%;background:#9fa6dc"></div>
<div class="abs cb" style="left:11px;top:11px"></div>
<div class="abs rt" style="left:48px;margin-top:0px">7</div>

<div class="abs" style="left:152px;top:11px"><svg width="15" height="18" viewBox="0 0 15 18"><path d="M1.3 10.3A5.85 5.85 0 1 0 7.1 4.4" fill="none" stroke="#4453c2" stroke-width="1.3" stroke-linecap="round"/><path d="M6.6 2.1L4 4.5 6.7 6.8z" fill="#4453c2" stroke="#4453c2" stroke-width="0.6" stroke-linejoin="round"/><path d="M6.5 8.1V10.5L8.5 12.4" fill="none" stroke="#4453c2" stroke-width="1.3" stroke-linecap="round"/></svg></div>
<div class="abs rd" style="left:193px;margin-top:0px">REV0009319</div>
<div class="abs rf" style="left:343px;margin-top:0px;">Oasis.msg</div>
</div>
<div class="abs row" style="top:450px;background:#ffffff">
<div class="abs cb" style="left:11px;top:11px"></div>
<div class="abs rt" style="left:48px;margin-top:0px">8</div>

<div class="abs" style="left:152px;top:11px"><svg width="15" height="18" viewBox="0 0 15 18"><path d="M1.3 10.3A5.85 5.85 0 1 0 7.1 4.4" fill="none" stroke="#4453c2" stroke-width="1.3" stroke-linecap="round"/><path d="M6.6 2.1L4 4.5 6.7 6.8z" fill="#4453c2" stroke="#4453c2" stroke-width="0.6" stroke-linejoin="round"/><path d="M6.5 8.1V10.5L8.5 12.4" fill="none" stroke="#4453c2" stroke-width="1.3" stroke-linecap="round"/></svg></div>
<div class="abs rd" style="left:193px;margin-top:0px">REV0009322</div>
<div class="abs rf" style="left:343px;margin-top:0px;">Project 2020 Definitive Agreement.msg</div>
</div>
<div class="abs row" style="top:490px;background:#f8f9fc"><div class="abs" style="left:0;top:0;width:3px;height:100%;background:#9fa6dc"></div>
<div class="abs cb" style="left:11px;top:11px"></div>
<div class="abs rt" style="left:48px;margin-top:0px">9</div>

<div class="abs" style="left:152px;top:11px"><svg width="15" height="18" viewBox="0 0 15 18"><path d="M1.3 10.3A5.85 5.85 0 1 0 7.1 4.4" fill="none" stroke="#4453c2" stroke-width="1.3" stroke-linecap="round"/><path d="M6.6 2.1L4 4.5 6.7 6.8z" fill="#4453c2" stroke="#4453c2" stroke-width="0.6" stroke-linejoin="round"/><path d="M6.5 8.1V10.5L8.5 12.4" fill="none" stroke="#4453c2" stroke-width="1.3" stroke-linecap="round"/></svg></div>
<div class="abs rd" style="left:193px;margin-top:0px">REV0009323</div>
<div class="abs rf" style="left:343px;margin-top:0px;">Oasis.msg</div>
</div>
<div class="abs row" style="top:530px;background:#ffffff">
<div class="abs cb" style="left:11px;top:11px"></div>
<div class="abs rt" style="left:48px;margin-top:0px">10</div>

<div class="abs" style="left:152px;top:11px"><svg width="15" height="18" viewBox="0 0 15 18"><path d="M1.3 10.3A5.85 5.85 0 1 0 7.1 4.4" fill="none" stroke="#4453c2" stroke-width="1.3" stroke-linecap="round"/><path d="M6.6 2.1L4 4.5 6.7 6.8z" fill="#4453c2" stroke="#4453c2" stroke-width="0.6" stroke-linejoin="round"/><path d="M6.5 8.1V10.5L8.5 12.4" fill="none" stroke="#4453c2" stroke-width="1.3" stroke-linecap="round"/></svg></div>
<div class="abs rd" style="left:193px;margin-top:0px">REV0009326</div>
<div class="abs rf" style="left:343px;margin-top:0px;">Service Agreement.msg</div>
</div>
<div class="abs row" style="top:570px;background:#f8f9fc"><div class="abs" style="left:0;top:0;width:3px;height:100%;background:#9fa6dc"></div>
<div class="abs cb" style="left:11px;top:11px"></div>
<div class="abs rt" style="left:48px;margin-top:0px">11</div>
<div class="abs" style="left:112px;top:12.7px"><svg width="16" height="16" viewBox="0 0 24 24"><path d="M16.5 6v11.5c0 2.21-1.79 4-4 4s-4-1.79-4-4V5c0-1.38 1.12-2.5 2.5-2.5s2.5 1.12 2.5 2.5v10.5c0 .55-.45 1-1 1s-1-.45-1-1V6H10v9.5c0 1.38 1.12 2.5 2.5 2.5s2.5-1.12 2.5-2.5V5c0-2.21-1.79-4-4-4S7 2.79 7 5v12.5c0 3.04 2.46 5.5 5.5 5.5s5.5-2.46 5.5-5.5V6h-1.5z" fill="#3a49b0" transform="rotate(44 12 12) translate(24 0) scale(-1 1)"/></svg></div>
<div class="abs" style="left:152px;top:11px"><svg width="15" height="18" viewBox="0 0 15 18"><path d="M1.3 10.3A5.85 5.85 0 1 0 7.1 4.4" fill="none" stroke="#4453c2" stroke-width="1.3" stroke-linecap="round"/><path d="M6.6 2.1L4 4.5 6.7 6.8z" fill="#4453c2" stroke="#4453c2" stroke-width="0.6" stroke-linejoin="round"/><path d="M6.5 8.1V10.5L8.5 12.4" fill="none" stroke="#4453c2" stroke-width="1.3" stroke-linecap="round"/></svg></div>
<div class="abs rd" style="left:193px;margin-top:0px">REV0009330</div>
<div class="abs rf" style="left:343px;margin-top:0px;">2000.8 form.msg</div>
</div>
<div class="abs row" style="top:610px;background:#ffffff">
<div class="abs cb" style="left:11px;top:11px"></div>
<div class="abs rt" style="left:48px;margin-top:0px">12</div>

<div class="abs" style="left:152px;top:11px"><svg width="15" height="18" viewBox="0 0 15 18"><path d="M1.3 10.3A5.85 5.85 0 1 0 7.1 4.4" fill="none" stroke="#4453c2" stroke-width="1.3" stroke-linecap="round"/><path d="M6.6 2.1L4 4.5 6.7 6.8z" fill="#4453c2" stroke="#4453c2" stroke-width="0.6" stroke-linejoin="round"/><path d="M6.5 8.1V10.5L8.5 12.4" fill="none" stroke="#4453c2" stroke-width="1.3" stroke-linecap="round"/></svg></div>
<div class="abs rd" style="left:193px;margin-top:0px">REV0009332</div>
<div class="abs rf" style="left:343px;margin-top:0px;">Re Oasis.msg</div>
</div>
<div class="abs row" style="top:650px;background:#f8f9fc"><div class="abs" style="left:0;top:0;width:3px;height:100%;background:#9fa6dc"></div>
<div class="abs cb" style="left:11px;top:11px"></div>
<div class="abs rt" style="left:48px;margin-top:0px">13</div>

<div class="abs" style="left:152px;top:11px"><svg width="15" height="18" viewBox="0 0 15 18"><path d="M1.3 10.3A5.85 5.85 0 1 0 7.1 4.4" fill="none" stroke="#4453c2" stroke-width="1.3" stroke-linecap="round"/><path d="M6.6 2.1L4 4.5 6.7 6.8z" fill="#4453c2" stroke="#4453c2" stroke-width="0.6" stroke-linejoin="round"/><path d="M6.5 8.1V10.5L8.5 12.4" fill="none" stroke="#4453c2" stroke-width="1.3" stroke-linecap="round"/></svg></div>
<div class="abs rd" style="left:193px;margin-top:0px">REV0009340</div>
<div class="abs rf" style="left:343px;margin-top:0px;">Condor and sale of PowderWind.msg</div>
</div>
<div class="abs row" style="top:690px;background:#ffffff">
<div class="abs cb" style="left:11px;top:11px"></div>
<div class="abs rt" style="left:48px;margin-top:0px">14</div>

<div class="abs" style="left:152px;top:11px"><svg width="15" height="18" viewBox="0 0 15 18"><path d="M1.3 10.3A5.85 5.85 0 1 0 7.1 4.4" fill="none" stroke="#4453c2" stroke-width="1.3" stroke-linecap="round"/><path d="M6.6 2.1L4 4.5 6.7 6.8z" fill="#4453c2" stroke="#4453c2" stroke-width="0.6" stroke-linejoin="round"/><path d="M6.5 8.1V10.5L8.5 12.4" fill="none" stroke="#4453c2" stroke-width="1.3" stroke-linecap="round"/></svg></div>
<div class="abs rd" style="left:193px;margin-top:0px">REV0009344</div>
<div class="abs rf" style="left:343px;margin-top:0px;">Affliate Work Offer.msg</div>
</div>
<div class="abs row" style="top:730px;background:#f8f9fc"><div class="abs" style="left:0;top:0;width:3px;height:100%;background:#9fa6dc"></div>
<div class="abs cb" style="left:11px;top:11px"></div>
<div class="abs rt" style="left:48px;margin-top:0px">15</div>
<div class="abs" style="left:112px;top:12.7px"><svg width="16" height="16" viewBox="0 0 24 24"><path d="M16.5 6v11.5c0 2.21-1.79 4-4 4s-4-1.79-4-4V5c0-1.38 1.12-2.5 2.5-2.5s2.5 1.12 2.5 2.5v10.5c0 .55-.45 1-1 1s-1-.45-1-1V6H10v9.5c0 1.38 1.12 2.5 2.5 2.5s2.5-1.12 2.5-2.5V5c0-2.21-1.79-4-4-4S7 2.79 7 5v12.5c0 3.04 2.46 5.5 5.5 5.5s5.5-2.46 5.5-5.5V6h-1.5z" fill="#3a49b0" transform="rotate(44 12 12) translate(24 0) scale(-1 1)"/></svg></div>
<div class="abs" style="left:152px;top:11px"><svg width="15" height="18" viewBox="0 0 15 18"><path d="M1.3 10.3A5.85 5.85 0 1 0 7.1 4.4" fill="none" stroke="#4453c2" stroke-width="1.3" stroke-linecap="round"/><path d="M6.6 2.1L4 4.5 6.7 6.8z" fill="#4453c2" stroke="#4453c2" stroke-width="0.6" stroke-linejoin="round"/><path d="M6.5 8.1V10.5L8.5 12.4" fill="none" stroke="#4453c2" stroke-width="1.3" stroke-linecap="round"/></svg></div>
<div class="abs rd" style="left:193px;margin-top:0px">REV0009347</div>
<div class="abs rf" style="left:343px;margin-top:0px;">Affliate Work Offer.msg</div>
</div>
<div class="abs row" style="top:770px;background:#ffffff">
<div class="abs cb" style="left:11px;top:11px"></div>
<div class="abs rt" style="left:48px;margin-top:0.5px">16</div>

<div class="abs" style="left:152px;top:11px"><svg width="15" height="18" viewBox="0 0 15 18"><path d="M1.3 10.3A5.85 5.85 0 1 0 7.1 4.4" fill="none" stroke="#4453c2" stroke-width="1.3" stroke-linecap="round"/><path d="M6.6 2.1L4 4.5 6.7 6.8z" fill="#4453c2" stroke="#4453c2" stroke-width="0.6" stroke-linejoin="round"/><path d="M6.5 8.1V10.5L8.5 12.4" fill="none" stroke="#4453c2" stroke-width="1.3" stroke-linecap="round"/></svg></div>
<div class="abs rd" style="left:193px;margin-top:0.5px">REV0009349</div>
<div class="abs rf" style="left:343px;margin-top:0.5px;">Wind River Conversion.msg</div>
</div>
<div class="abs row" style="top:810px;background:#f8f9fc"><div class="abs" style="left:0;top:0;width:3px;height:100%;background:#9fa6dc"></div>
<div class="abs cb" style="left:11px;top:11px"></div>
<div class="abs rt" style="left:48px;margin-top:1.5px">17</div>

<div class="abs" style="left:152px;top:11px"><svg width="15" height="18" viewBox="0 0 15 18"><path d="M1.3 10.3A5.85 5.85 0 1 0 7.1 4.4" fill="none" stroke="#4453c2" stroke-width="1.3" stroke-linecap="round"/><path d="M6.6 2.1L4 4.5 6.7 6.8z" fill="#4453c2" stroke="#4453c2" stroke-width="0.6" stroke-linejoin="round"/><path d="M6.5 8.1V10.5L8.5 12.4" fill="none" stroke="#4453c2" stroke-width="1.3" stroke-linecap="round"/></svg></div>
<div class="abs rd" style="left:193px;margin-top:1.5px">REV0009350</div>
<div class="abs rf" style="left:343px;margin-top:1.5px;">CA’s.msg</div>
</div>
<div class="abs rb" style="top:210px"></div>
<div class="abs rb" style="top:250px"></div>
<div class="abs rb" style="top:290px"></div>
<div class="abs rb" style="top:330px"></div>
<div class="abs rb" style="top:370px"></div>
<div class="abs rb" style="top:410px"></div>
<div class="abs rb" style="top:450px"></div>
<div class="abs rb" style="top:490px"></div>
<div class="abs rb" style="top:530px"></div>
<div class="abs rb" style="top:570px"></div>
<div class="abs rb" style="top:610px"></div>
<div class="abs rb" style="top:650px"></div>
<div class="abs rb" style="top:690px"></div>
<div class="abs rb" style="top:730px"></div>
<div class="abs rb" style="top:770px"></div>
<div class="abs rb" style="top:810px"></div>
<div class="abs rb" style="top:850px"></div>
</div>
<div class="abs" style="left:465px;top:846px;width:700px;height:1px;background:#e0e3ea"></div>
<!-- footer -->
<div class="abs" style="left:467px;top:865px;width:18px;height:17.5px;background:#7b8396;border-radius:2px"></div>
<div class="abs" style="left:471px;top:872.5px;width:10px;height:2.5px;background:#fff"></div>
<div class="abs" style="left:489px;top:865px;width:18px;height:17.5px;background:#3848b4;border-radius:2px;color:#fff;font-size:11px;line-height:17.5px;text-align:center">0</div>
<div class="abs" style="left:511px;top:863px;font-size:14.5px;line-height:20px;color:#3446b4;white-space:nowrap">File Selected</div>
<div class="abs" style="left:605px;top:866px;width:1.5px;height:14px;background:#c8cbd3"></div>
<div class="abs" style="left:617.4px;top:859px;width:27.6px;height:27.6px;border-radius:50%;background:#ebecf0"></div>
<div class="abs" style="left:646.6px;top:859px;width:27.6px;height:27.6px;border-radius:50%;background:#ebecf0"></div>
<div class="abs" style="left:676.2px;top:859px;width:27.6px;height:27.6px;border-radius:50%;background:#3f4db4"></div>
<div class="abs" style="left:705.6px;top:859px;width:27.6px;height:27.6px;border-radius:50%;background:#ebecf0"></div>
<div class="abs" style="left:734.8px;top:859px;width:27.6px;height:27.6px;border-radius:50%;background:#ebecf0"></div>
<div class="abs" style="left:764.2px;top:859px;width:27.6px;height:27.6px;border-radius:50%;background:#ebecf0"></div>
<div class="abs" style="left:793.5px;top:859px;width:27.6px;height:27.6px;border-radius:50%;background:#ebecf0"></div>
<svg class="abs" style="left:626.2px;top:866.7px" width="10" height="12" viewBox="0 0 10 12"><path d="M1.5 1v10M8.5 1L3.5 6l5 5" fill="none" stroke="#9aa0ae" stroke-width="1.5"/></svg>
<svg class="abs" style="left:655.4px;top:866.7px" width="10" height="12" viewBox="0 0 10 12"><path d="M6.5 1.5L2.5 6l4 4.5" fill="none" stroke="#9aa0ae" stroke-width="1.5"/></svg>
<div class="abs" style="left:676.2px;top:862.7px;width:27.6px;text-align:center;font-size:19px;line-height:20px;-webkit-text-stroke:0;color:#ffffff">1</div>
<div class="abs" style="left:705.6px;top:862.7px;width:27.6px;text-align:center;font-size:19px;line-height:20px;-webkit-text-stroke:0;color:#9aa0ae">2</div>
<div class="abs" style="left:734.8px;top:862.7px;width:27.6px;text-align:center;font-size:19px;line-height:20px;-webkit-text-stroke:0;color:#9aa0ae">3</div>
<svg class="abs" style="left:773.0px;top:866.7px" width="10" height="12" viewBox="0 0 10 12"><path d="M2.5 1.5L6.5 6l-4 4.5" fill="none" stroke="#9aa0ae" stroke-width="1.5"/></svg>
<svg class="abs" style="left:802.3px;top:866.7px" width="10" height="12" viewBox="0 0 10 12"><path d="M1.5 1l5 5-5 5M8.5 1v10" fill="none" stroke="#9aa0ae" stroke-width="1.5"/></svg>
</body></html>
